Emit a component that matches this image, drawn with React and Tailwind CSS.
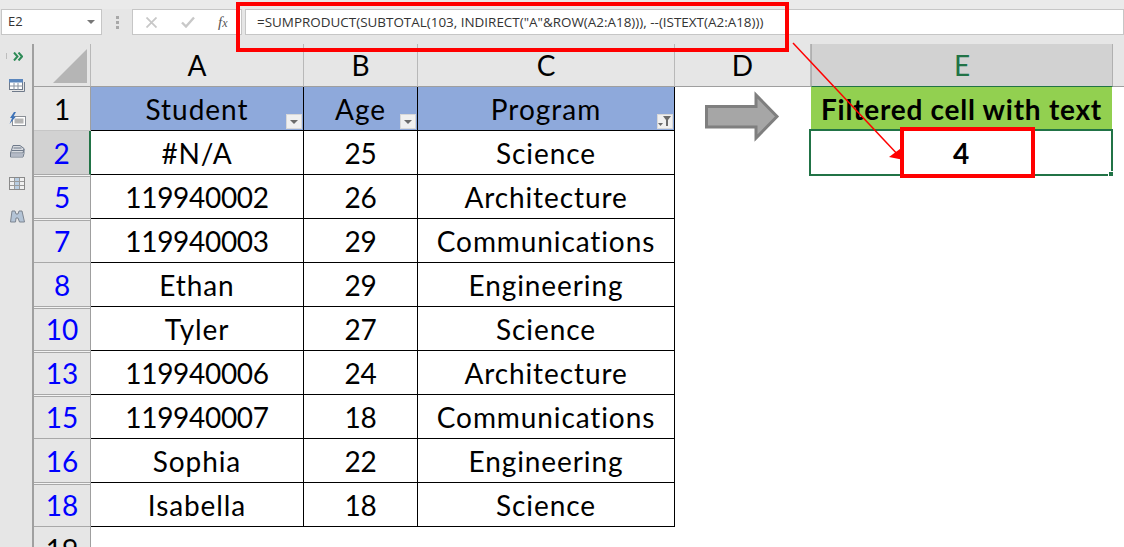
import React from 'react'

const font = { fontFamily: 'Lato, sans-serif', fontVariantLigatures: 'none' }

const cols = 'grid grid-cols-[57px_213px_114px_257px_136px_302px_1fr]'

// rows that follow hidden (filtered out) rows get the double line in the header
const rows = [
  { n: 2, a: '#N/A', b: '25', c: 'Science', active: true },
  { n: 5, a: '119940002', b: '26', c: 'Architecture', gap: true },
  { n: 7, a: '119940003', b: '29', c: 'Communications', gap: true },
  { n: 8, a: 'Ethan', b: '29', c: 'Engineering' },
  { n: 10, a: 'Tyler', b: '27', c: 'Science', gap: true },
  { n: 13, a: '119940006', b: '24', c: 'Architecture', gap: true },
  { n: 15, a: '119940007', b: '18', c: 'Communications', gap: true },
  { n: 16, a: 'Sophia', b: '22', c: 'Engineering' },
  { n: 18, a: 'Isabella', b: '18', c: 'Science', gap: true },
]

const isNum = (s) => /^\d+$/.test(s)

const FilterButton = ({ filtered }) => (
  <div className="absolute right-[1px] bottom-[1px] w-[16px] h-[15px] bg-[#f0f0f0] border border-[#d8d8d8] flex items-center justify-center">
    {filtered ? (
      <svg width="14" height="11" viewBox="0 0 14 11">
        <path d="M5 0h8L10 4v6H8V4z" fill="#6b6b6b" />
        <path d="M0 7h5L2.500 10z" fill="#6b6b6b" />
      </svg>
    ) : (
      <svg width="8" height="4" viewBox="0 0 8 4">
        <path d="M0 0h8L4 4z" fill="#6b6b6b" />
      </svg>
    )}
  </div>
)

const ColHead = ({ label }) => (
  <div className="flex items-center justify-center text-[28px] leading-none text-black border-r border-[#b8b8b8] border-b border-b-[#9f9f9f]">
    {label}
  </div>
)

const Cell = ({ text }) => (
  <div className={`border-r border-b border-black flex items-center justify-center ${isNum(text) ? 'tracking-[-0.3px]' : 'tracking-[0.9px]'}`}>
    {text}
  </div>
)

const HeadCell = ({ text, filtered }) => (
  <div className="relative bg-[#8ea9db] border-r border-b border-black flex items-center justify-center tracking-[1px]">
    {text}
    <FilterButton filtered={filtered} />
  </div>
)

const Side = ({ children, className = 'h-[32.500px]' }) => (
  <div className={`flex items-center justify-center ${className}`}>{children}</div>
)

export default function App() {
  return (
    <div className="relative w-[1124px] h-[547px] overflow-hidden bg-white" style={font}>
      {/* formula bar */}
      <div className="h-[45px] bg-[#e6e6e6] flex items-start border-t-[9px] border-t-[#eaeaea]">
        <div className="w-[101px] h-[26px] ml-[1px] bg-white border border-[#c6c6c6] flex items-center justify-between pl-[6px] pr-[6px] text-[13px] text-[#333]" style={{ fontFamily: 'Open Sans, sans-serif' }}>
          <span>E2</span>
          <svg width="8" height="4" viewBox="0 0 8 4"><path d="M0 0h8L4 4z" fill="#777" /></svg>
        </div>
        <div className="w-[30px] h-[26px] flex flex-col items-center justify-center gap-[2px]">
          <span className="w-[3px] h-[3px] bg-[#a8a8a8]" />
          <span className="w-[3px] h-[3px] bg-[#a8a8a8]" />
          <span className="w-[3px] h-[3px] bg-[#a8a8a8]" />
        </div>
        <div className="w-[110px] h-[26px] bg-white border border-[#c6c6c6] flex items-center">
          <svg className="ml-[13px]" width="11" height="11" viewBox="0 0 11 11"><path d="M.5.5l10 10M10.500.5l-10 10" stroke="#c8c8c8" strokeWidth="1.800" fill="none" /></svg>
          <svg className="ml-[24px]" width="14" height="12" viewBox="0 0 14 12"><path d="M1 6.500l4 4 8-9" stroke="#c8c8c8" strokeWidth="2.400" fill="none" /></svg>
          <span className="ml-[23px] text-[15px] leading-none italic text-[#555]" style={{ fontFamily: 'Liberation Serif, serif' }}>f<span className="text-[12px]">x</span></span>
        </div>
        <div className="w-[3px]" />
        <div className="flex-1 h-[26px] bg-white border border-[#c6c6c6] flex items-center pl-[11px] text-[13.450px] text-[#333] whitespace-nowrap" style={{ fontFamily: 'Open Sans, sans-serif' }}>
          =SUMPRODUCT(SUBTOTAL(103, INDIRECT("A"&ROW(A2:A18))), --(ISTEXT(A2:A18)))
        </div>
      </div>

      <div className="flex -mt-[1px]">
        {/* left add-in strip */}
        <div className="w-[33px] h-[503px] bg-[#e6e6e6] flex flex-col">
          <Side className="h-[25px] relative">
            <span className="absolute left-[6px] top-[9px] w-[1px] h-[6px] bg-[#bdbdbd]" />
            <svg className="ml-[2px]" width="10" height="9" viewBox="0 0 10 9"><path d="M1 .5l3.500 4L1 8.500M5.500.5l3.500 4-3.500 4" stroke="#2e8b57" strokeWidth="2" fill="none" /></svg>
          </Side>
          <div className="h-[1px]" />
          <Side>
            <svg width="16" height="14" viewBox="0 0 16 14"><path d="M15.500 3v9.500H3" stroke="#6f7a8a" fill="none" /><rect x="0.500" y="0.500" width="13" height="10" fill="#fff" stroke="#6f7a8a" /><rect x="0" y="0" width="14" height="3.500" fill="#5a86bd" /><path d="M5 4v7M9 4v7M1 7h13" stroke="#8a93a0" /></svg>
          </Side>
          <Side>
            <svg width="18" height="14" viewBox="0 0 18 14"><rect x="4.500" y="4.500" width="13" height="9" fill="#fff" stroke="#8a8f96" /><rect x="6.500" y="6.500" width="9" height="5" fill="#b4b4b4" /><path d="M6 0L2 6h2l-2.500 6L8 4.500H5.500L8 0z" fill="#3f73b8" /></svg>
          </Side>
          <Side>
            <svg width="16" height="13" viewBox="0 0 16 13"><path d="M4 .5h7l4 3v5l-1 3.500H1.500v-4z" fill="#d8dbe0" stroke="#6f7a8a" /><path d="M1.500 8h12.500l1-4M3 5.500h11M4.500 3h8" stroke="#6f7a8a" fill="none" /><path d="M2 8.500h12v3H2z" fill="#b4bac6" /></svg>
          </Side>
          <Side>
            <svg width="16" height="13" viewBox="0 0 16 13"><rect x="0.500" y="0.500" width="15" height="12" fill="#f0f0f0" stroke="#8a8a8a" /><rect x="5" y="1" width="6" height="11" fill="#b8cde2" /><path d="M5.500 1v11M10.500 1v11M1 4.500h14M1 8.500h14" stroke="#9a9a9a" /></svg>
          </Side>
          <Side>
            <svg width="16" height="13" viewBox="0 0 16 13"><path d="M3 1h3l1 3h2l1-3h3l2.500 11h-5L9 8H7l-.5 4h-5z" fill="#b4c4d6" stroke="#7d8590" /></svg>
          </Side>
        </div>

        {/* sheet */}
        <div className="flex-1 border-l-2 border-[#a0a0a0] -ml-[1px]">
          <div className={`${cols} h-[43px] bg-[#e6e6e6]`}>
            <div className="border-r border-[#b8b8b8] border-b border-b-[#9f9f9f] pl-[19px] pt-[5px]">
              <svg width="34" height="34" viewBox="0 0 34 34"><path d="M34 0v34H0z" fill="#b5b5b5" /></svg>
            </div>
            <ColHead label="A" />
            <ColHead label="B" />
            <ColHead label="C" />
            <ColHead label="D" />
            <div className="flex items-center justify-center text-[28px] leading-none text-[#217346] bg-[#d2d2d2] border-x border-[#b0b0b0] border-b border-b-[#217346]">E</div>
            <div className="border-b border-b-[#9f9f9f]" />
          </div>

          <div className={`${cols} h-[44px] text-[28px] leading-none`}>
            <div className="bg-[#e6e6e6] border-r border-[#9f9f9f] border-b border-b-[#c6c6c6] flex items-center justify-center text-black">1</div>
            <HeadCell text="Student" />
            <HeadCell text="Age" />
            <HeadCell text="Program" filtered />
            <div />
            <div className="bg-[#92d050] mr-[1px] font-bold tracking-[0.74px] flex items-center justify-center">Filtered cell with text</div>
          </div>

          {rows.map((r) => (
            <div key={r.n} className={`${cols} h-[44px] text-[28px] leading-none`}>
              <div className={`flex flex-col text-[#0000ff] ${r.active ? 'bg-[#d2d2d2] border-r-2 border-r-[#217346]' : 'bg-[#e6e6e6] border-r border-[#9f9f9f]'} border-b border-b-[#a8a8a8]`}>
                {r.gap && <div className="h-[1px] bg-[#f4f4f4] shrink-0" />}
                {r.gap && <div className="h-[1px] bg-[#a8a8a8] shrink-0" />}
                <div className={`flex-1 flex items-center justify-center ${r.gap ? '-mt-[2px]' : ''}`}>{r.n}</div>
              </div>
              <Cell text={r.a} />
              <Cell text={r.b} />
              <Cell text={r.c} />
              <div />
              {r.active && (
                <div className="relative -ml-[2px] -mt-[2px] -mb-[1px] border-2 border-[#217346] font-bold flex items-center justify-center">
                  4
                  <span className="absolute right-[-3px] bottom-[-3px] w-[6px] h-[6px] bg-[#217346] border border-white" />
                </div>
              )}
            </div>
          ))}

          <div className={`${cols} h-[44px] text-[28px] leading-none`}>
            <div className="bg-[#e6e6e6] border-r border-[#9f9f9f] flex items-center justify-center text-black">19</div>
          </div>
        </div>
      </div>

      {/* callouts drawn over the sheet */}
      <div className="absolute left-[236px] top-[2px] w-[553px] h-[50px] border-[4px] border-[#ff0000]" />
      <div className="absolute left-[900px] top-[127px] w-[135px] h-[51px] border-[4px] border-[#ff0000]" />
      <svg className="absolute left-0 top-0 pointer-events-none" width="1124" height="547" viewBox="0 0 1124 547">
        <path d="M793 43L900 157" stroke="#ff0000" strokeWidth="1.500" fill="none" />
        <path d="M889 157L904 146V160z" fill="#ff0000" />
        <path d="M706.500 106.500H756V95L777 116.500L756 138V127H706.500z" fill="#a6a6a6" stroke="#7f7f7f" strokeWidth="3" />
      </svg>
    </div>
  )
}
